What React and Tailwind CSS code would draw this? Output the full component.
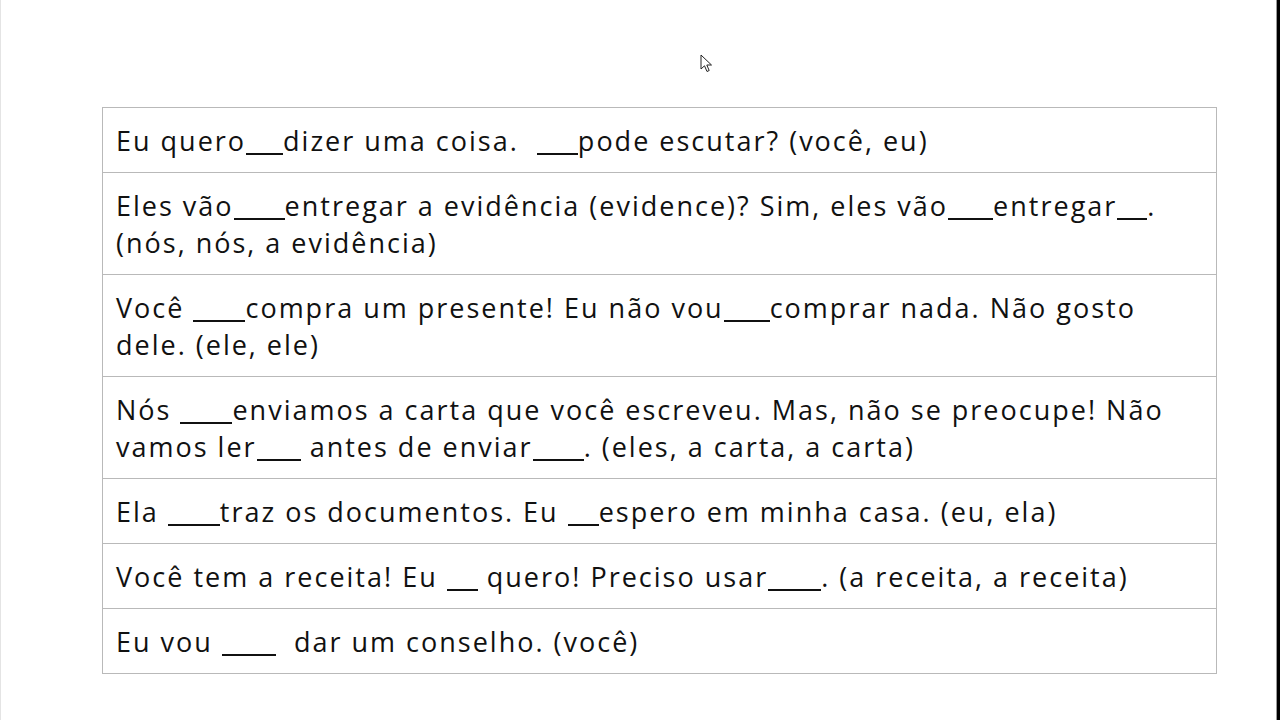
import React from "react";

// numbers are blank widths (px)
const rows = [
  [["Eu quero", 37, "dizer uma coisa.\u00a0 ", 41, "pode escutar? (você, eu)"]],
  [
    ["Eles vão", 51, "entregar a evidência (evidence)? Sim, eles vão", 45, "entregar", 30, "."],
    ["(nós, nós, a evidência)"],
  ],
  [
    ["Você ", 52, "compra um presente! Eu não vou", 46, "comprar nada. Não gosto"],
    ["dele. (ele, ele)"],
  ],
  [
    ["Nós ", 52, "enviamos a carta que você escreveu. Mas, não se preocupe! Não"],
    ["vamos ler", 44, " antes de enviar", 51, ". (eles, a carta, a carta)"],
  ],
  [["Ela ", 52, "traz os documentos. Eu ", 31, "espero em minha casa. (eu, ela)"]],
  [["Você tem a receita! Eu ", 31, " quero! Preciso usar", 53, ". (a receita, a receita)"]],
  [["Eu vou ", 54, "\u00a0 dar um conselho. (você)"]],
];

const Blank = ({ w }) => (
  <span className="mb-[-4px] inline-block border-b-2 border-[#111] align-baseline" style={{ width: w }} />
);

const Cursor = () => (
  <svg className="absolute left-[700px] top-[54px]" width="14" height="20" viewBox="0 0 14 20">
    <path d="M1 1 L1 15 L4.5 11.8 L7 17.5 L9.2 16.5 L6.8 11 L11.5 11 Z" fill="#fff" stroke="#222" strokeWidth="1" strokeLinejoin="round" />
  </svg>
);

export default function App() {
  return (
    <div className="relative flex h-[720px] w-[1280px] bg-white" style={{ fontFamily: '"Open Sans", sans-serif' }}>
      <div className="flex-1 border-l border-[#e4e4e4] pl-[101px] pt-[107px]">
        <div className="w-[1115px] border border-[#b9b9b9]">
          {rows.map((lines, i) => (
            <div
              key={i}
              className={`px-[13px] pt-[14px] pb-[13px] text-[27px] leading-[37px] tracking-[2px] text-[#111] ${i > 0 ? "border-t border-[#b9b9b9]" : ""}`}
            >
              {lines.map((parts, j) => (
                <div key={j} className="whitespace-pre">
                  {parts.map((p, k) => (typeof p === "number" ? <Blank key={k} w={p} /> : <span key={k}>{p}</span>))}
                </div>
              ))}
            </div>
          ))}
        </div>
      </div>
      <div className="w-[1px] bg-[#9a9a9a]" />
      <div className="w-[3px] bg-black" />
      <Cursor />
    </div>
  );
}
